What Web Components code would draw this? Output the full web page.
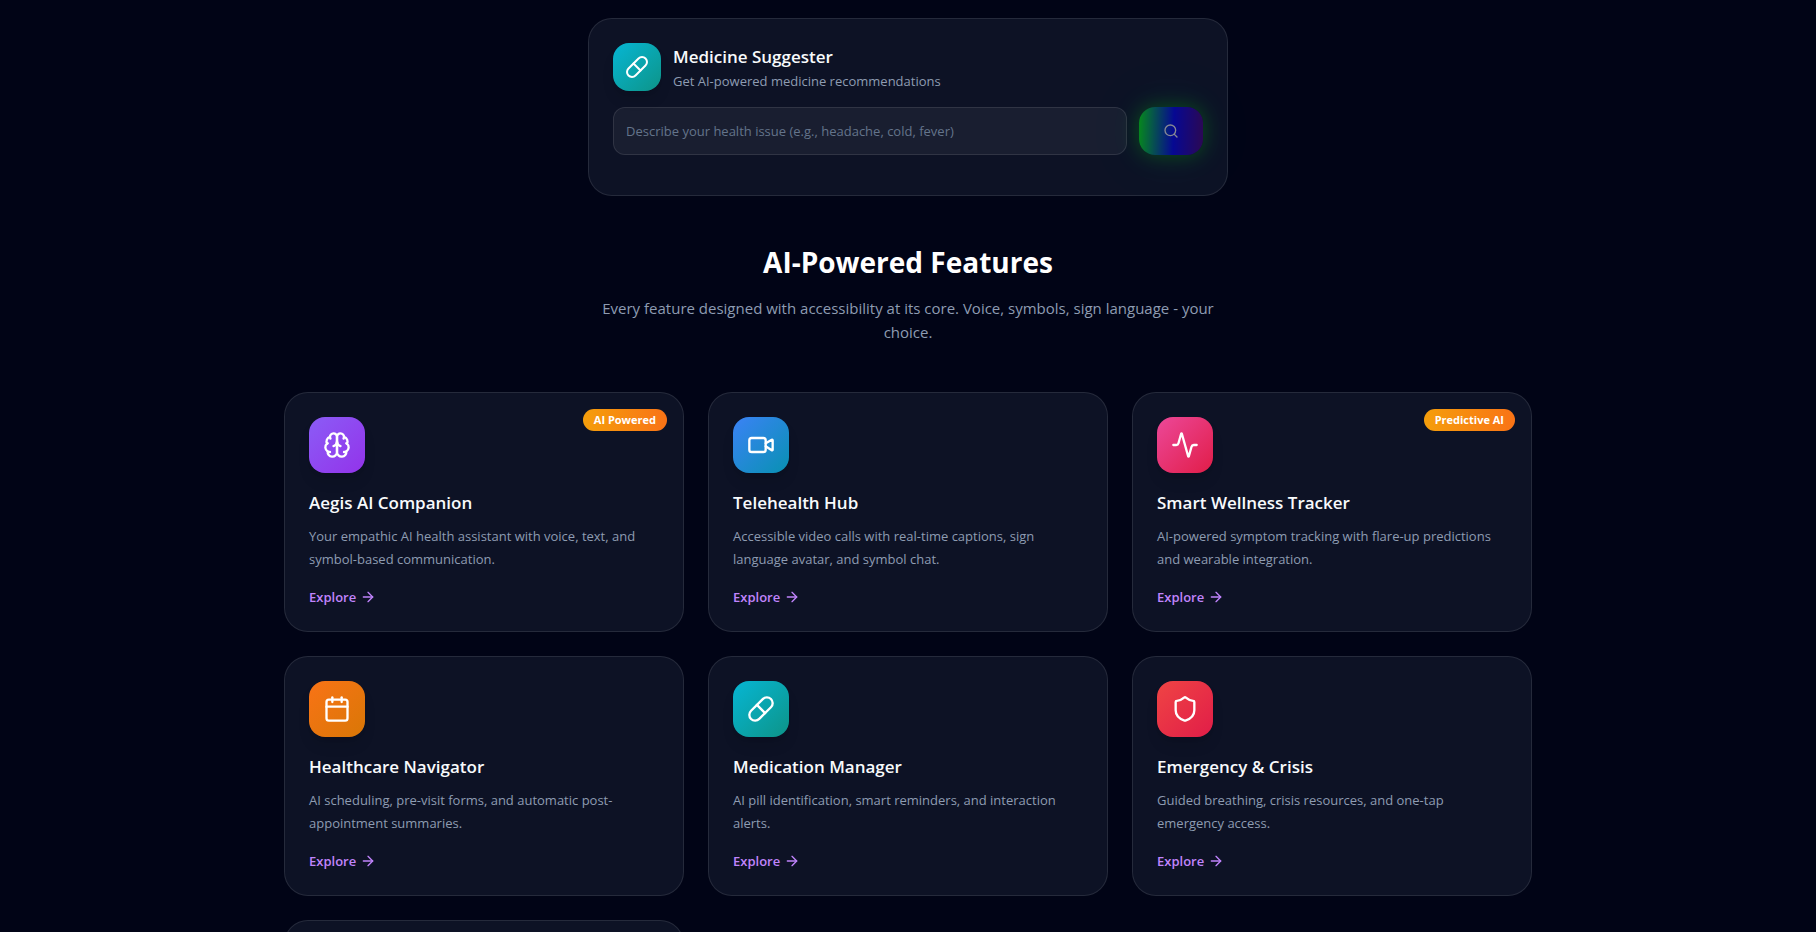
<!DOCTYPE html>
<html lang="en">
<head>
  <meta charset="utf-8">
  <meta name="viewport" content="width=device-width, initial-scale=1">
  <title>AI-Powered Features</title>
  <style>
    :root {
      --surface: #0d1225;
      --line: rgba(255, 255, 255, 0.1);
      --text: #f8fafc;
      --muted: #8e9cb2;
      --accent: #c084fc;
    }
    html,
    body {
      height: 100%;
    }
    body {
      margin: 0;
      overflow: hidden;
      background: #010416;
      color: var(--text);
      font-family: "Open Sans", "Noto Sans", sans-serif;
    }
  </style>
</head>
<body>
  <aegis-page>
    <medicine-suggester slot="search"></medicine-suggester>
    <section-heading slot="heading">
      AI-Powered Features
      <span slot="text">Every feature designed with accessibility at its core. Voice, symbols, sign language - your choice.</span>
    </section-heading>

    <feature-card icon="brain" from="#8b5cf6" to="#9333ea" badge="AI Powered">
      <span slot="title">Aegis AI Companion</span>
      Your empathic AI health assistant with voice, text, and symbol-based communication.
    </feature-card>
    <feature-card icon="video" from="#3b82f6" to="#0891b2">
      <span slot="title">Telehealth Hub</span>
      Accessible video calls with real-time captions, sign language avatar, and symbol chat.
    </feature-card>
    <feature-card icon="activity" from="#ec4899" to="#e11d48" badge="Predictive AI">
      <span slot="title">Smart Wellness Tracker</span>
      AI-powered symptom tracking with flare-up predictions and wearable integration.
    </feature-card>
    <feature-card icon="calendar" from="#f97316" to="#d97706">
      <span slot="title">Healthcare Navigator</span>
      AI scheduling, pre-visit forms, and automatic post-appointment summaries.
    </feature-card>
    <feature-card icon="pill" from="#06b6d4" to="#0d9488">
      <span slot="title">Medication Manager</span>
      AI pill identification, smart reminders, and interaction alerts.
    </feature-card>
    <feature-card icon="shield" from="#ef4444" to="#e11d48">
      <span slot="title">Emergency &amp; Crisis</span>
      Guided breathing, crisis resources, and one-tap emergency access.
    </feature-card>
    <glass-panel></glass-panel>
  </aegis-page>

  <script>
    const ICONS = {
      activity: `<path d="M22 12h-2.48a2 2 0 0 0-1.93 1.46l-2.35 8.36a.25.25 0 0 1-.48 0L9.24 2.18a.25.25 0 0 0-.48 0l-2.35 8.36A2 2 0 0 1 4.49 12H2"/>`,
      arrow: `<path d="M5 12h14"/><path d="m12 5 7 7-7 7"/>`,
      brain: `
        <path d="M12 5a3 3 0 1 0-5.997.125 4 4 0 0 0-2.526 5.77 4 4 0 0 0 .556 6.588A4 4 0 1 0 12 18Z"/>
        <path d="M12 5a3 3 0 1 1 5.997.125 4 4 0 0 1 2.526 5.77 4 4 0 0 1-.556 6.588A4 4 0 1 1 12 18Z"/>
        <path d="M15 13a4.5 4.5 0 0 1-3-4 4.5 4.5 0 0 1-3 4"/>
        <path d="M17.599 6.5a3 3 0 0 0 .399-1.375"/>
        <path d="M6.003 5.125A3 3 0 0 0 6.401 6.5"/>
        <path d="M3.477 10.896a4 4 0 0 1 .585-.396"/>
        <path d="M19.938 10.5a4 4 0 0 1 .585.396"/>
        <path d="M6 18a4 4 0 0 1-1.967-.516"/>
        <path d="M19.967 17.484A4 4 0 0 1 18 18"/>`,
      calendar: `<path d="M8 2v4"/><path d="M16 2v4"/><rect width="18" height="18" x="3" y="4" rx="2"/><path d="M3 10h18"/>`,
      pill: `<path d="m10.5 20.5 10-10a4.95 4.95 0 1 0-7-7l-10 10a4.95 4.95 0 1 0 7 7Z"/><path d="m8.5 8.5 7 7"/>`,
      search: `<circle cx="11" cy="11" r="8"/><path d="m21 21-4.3-4.3"/>`,
      shield: `<path d="M20 13c0 5-3.5 7.5-7.66 8.95a1 1 0 0 1-.67-.01C7.5 20.5 4 18 4 13V6a1 1 0 0 1 1-1c2 0 4.5-1.2 6.24-2.72a1.17 1.17 0 0 1 1.52 0C14.51 3.81 17 5 19 5a1 1 0 0 1 1 1z"/>`,
      video: `<path d="m16 13 5.223 3.482a.5.5 0 0 0 .777-.416V7.87a.5.5 0 0 0-.752-.432L16 10.5"/><rect x="2" y="6" width="14" height="12" rx="2"/>`,
    };

    class LineIcon extends HTMLElement {
      constructor() {
        super();

        this.attachShadow({ mode: "open" }).innerHTML = `
          <style>
            :host {
              display: block;
              width: 16px;
              height: 16px;
            }
            svg {
              display: block;
              width: 100%;
              height: 100%;
            }
          </style>
          <svg viewBox="0 0 24 24" fill="none" stroke="currentColor" stroke-width="2" stroke-linecap="round" stroke-linejoin="round" aria-hidden="true"></svg>
        `;
      }

      connectedCallback() {
        this.shadowRoot.querySelector("svg").innerHTML = ICONS[this.getAttribute("name")] || "";
      }
    }

    window.customElements.define("line-icon", LineIcon);

    // Rounded gradient square with an icon in the middle
    class IconTile extends HTMLElement {
      constructor() {
        super();

        this.attachShadow({ mode: "open" }).innerHTML = `
          <style>
            :host {
              display: grid;
              place-items: center;
              flex: none;
              width: 56px;
              height: 56px;
              border-radius: 16px;
              color: #fff;
              background: linear-gradient(to bottom right, var(--from), var(--to));
              box-shadow: 0 10px 15px -3px rgba(0, 0, 0, 0.1), 0 4px 6px -4px rgba(0, 0, 0, 0.1);
            }
            :host([small]) {
              width: 48px;
              height: 48px;
            }
            line-icon {
              width: 28px;
              height: 28px;
            }
            :host([small]) line-icon {
              width: 24px;
              height: 24px;
            }
          </style>
          <line-icon></line-icon>
        `;
      }

      connectedCallback() {
        const icon = document.createElement("line-icon");
        icon.setAttribute("name", this.getAttribute("icon"));
        this.shadowRoot.querySelector("line-icon").replaceWith(icon);
        this.style.setProperty("--from", this.getAttribute("from"));
        this.style.setProperty("--to", this.getAttribute("to"));
      }
    }

    class GlassPanel extends HTMLElement {
      constructor() {
        super();

        this.attachShadow({ mode: "open" }).innerHTML = `
          <style>
            :host {
              display: block;
              box-sizing: border-box;
              min-height: 178px;
              padding: 24px;
              border: 1px solid var(--line);
              border-radius: 24px;
              background: var(--surface);
            }
          </style>
          <slot></slot>
        `;
      }
    }

    window.customElements.define("glass-panel", GlassPanel);

    class MedicineSuggester extends HTMLElement {
      constructor() {
        super();

        this.attachShadow({ mode: "open" }).innerHTML = `
          <style>
            :host {
              display: block;
            }
            header {
              display: flex;
              align-items: center;
              gap: 12px;
              margin-bottom: 16px;
            }
            h3,
            p {
              margin: 0;
            }
            h3 {
              font-size: 17px;
              font-weight: 600;
              line-height: 28px;
            }
            p {
              color: var(--muted);
              font-size: 13px;
              line-height: 20px;
            }
            form {
              display: flex;
              gap: 12px;
              margin: 0 0 16px;
            }
            input {
              flex: 1;
              min-width: 0;
              height: 48px;
              box-sizing: border-box;
              padding: 0 12px;
              border: 1px solid var(--line);
              border-radius: 12px;
              background: rgba(255, 255, 255, 0.05);
              color: inherit;
              font: inherit;
              font-size: 13px;
            }
            input::placeholder {
              color: #64748b;
              opacity: 1;
            }
            button {
              display: grid;
              place-items: center;
              width: 64px;
              height: 48px;
              padding: 0;
              border: 0;
              border-radius: 16px;
              color: #fff;
              background: linear-gradient(92deg, #00ff14, #0000ff 54%, #4b0082);
              box-shadow: 0 0 20px rgba(0, 255, 0, 0.5), 0 0 60px rgba(0, 255, 255, 0.1);
              opacity: 0.5;
            }
          </style>
          <glass-panel>
            <header>
              <icon-tile small icon="pill" from="#06b6d4" to="#0d9488"></icon-tile>
              <div>
                <h3>Medicine Suggester</h3>
                <p>Get AI-powered medicine recommendations</p>
              </div>
            </header>
            <form>
              <input type="text" aria-label="Health issue" placeholder="Describe your health issue (e.g., headache, cold, fever)">
              <button type="submit" aria-label="Search" disabled>
                <line-icon name="search"></line-icon>
              </button>
            </form>
          </glass-panel>
        `;
      }
    }

    class SectionHeading extends HTMLElement {
      constructor() {
        super();

        this.attachShadow({ mode: "open" }).innerHTML = `
          <style>
            :host {
              display: block;
              text-align: center;
            }
            h2 {
              margin: 0 0 16px;
              color: #fff;
              font-size: 28px;
              font-weight: 700;
              line-height: 36px;
            }
            p {
              margin: 0;
              color: var(--muted);
              font-size: 15px;
              line-height: 24px;
            }
          </style>
          <h2><slot></slot></h2>
          <p><slot name="text"></slot></p>
        `;
      }
    }

    class FeatureCard extends HTMLElement {
      constructor() {
        super();

        this.attachShadow({ mode: "open" }).innerHTML = `
          <style>
            :host {
              display: block;
              position: relative;
            }
            icon-tile {
              margin-bottom: 16px;
            }
            .badge {
              position: absolute;
              top: 17px;
              right: 17px;
              padding: 3px 11px;
              border-radius: 12px;
              background: linear-gradient(to right, #f59e0b, #f97316);
              color: #fff;
              font-size: 11px;
              font-weight: 700;
              line-height: 16px;
            }
            h3 {
              margin: 0 0 8px;
              font-size: 17px;
              font-weight: 600;
              line-height: 28px;
            }
            p {
              margin: 0 0 16px;
              color: var(--muted);
              font-size: 13px;
              line-height: 23px;
            }
            a {
              display: flex;
              align-items: center;
              gap: 4px;
              width: fit-content;
              color: var(--accent);
              font-size: 13px;
              font-weight: 600;
              line-height: 20px;
              text-decoration: none;
            }
          </style>
          <glass-panel>
            <icon-tile></icon-tile>
            <h3><slot name="title"></slot></h3>
            <p><slot></slot></p>
            <a href="#">Explore <line-icon name="arrow"></line-icon></a>
          </glass-panel>
        `;
      }

      connectedCallback() {
        const tile = this.shadowRoot.querySelector("icon-tile");
        for (let name of ["icon", "from", "to"]) {
          tile.setAttribute(name, this.getAttribute(name));
        }
        if (this.hasAttribute("badge")) {
          const badge = document.createElement("span");
          badge.className = "badge";
          badge.textContent = this.getAttribute("badge");
          this.shadowRoot.append(badge);
        }
      }
    }

    class AegisPage extends HTMLElement {
      constructor() {
        super();

        this.attachShadow({ mode: "open" }).innerHTML = `
          <style>
            :host {
              display: block;
              max-width: 1248px;
              margin: 0 auto;
              padding: 18px 16px;
            }
            .intro {
              display: grid;
              gap: 48px;
              max-width: 640px;
              margin: 0 auto 48px;
            }
            .features {
              display: grid;
              grid-template-columns: repeat(3, 1fr);
              gap: 24px;
            }
            @media (max-width: 1024px) {
              .features {
                grid-template-columns: repeat(2, 1fr);
              }
            }
            @media (max-width: 640px) {
              .features {
                grid-template-columns: 1fr;
              }
            }
          </style>
          <div class="intro">
            <slot name="search"></slot>
            <slot name="heading"></slot>
          </div>
          <main class="features"><slot></slot></main>
        `;
      }
    }

    window.customElements.define("feature-card", FeatureCard);
    window.customElements.define("icon-tile", IconTile);
    window.customElements.define("section-heading", SectionHeading);
    window.customElements.define("medicine-suggester", MedicineSuggester);
    window.customElements.define("aegis-page", AegisPage);
  </script>
</body>
</html>
